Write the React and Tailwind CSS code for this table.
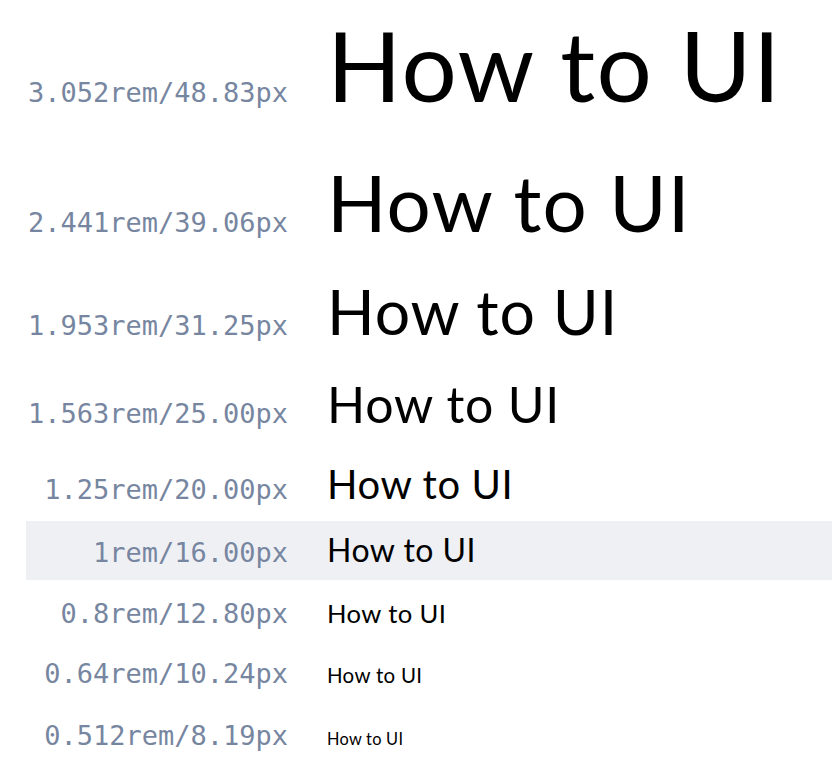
import React from 'react';

const rows = [
  { label: '3.052rem/48.83px', size: 'text-[97.66px]', row: 'h-[148px] pt-[16px]' },
  { label: '2.441rem/39.06px', size: 'text-[78.12px]', row: 'h-[120px] pt-[15px]' },
  { label: '1.953rem/31.25px', size: 'text-[62.5px]', row: 'h-[100px] pt-[12px]' },
  { label: '1.563rem/25.00px', size: 'text-[50px]', row: 'h-[82px] pt-[11px]' },
  { label: '1.25rem/20.00px', size: 'text-[40px]', row: 'h-[71px] pt-[14px]' },
  { label: '1rem/16.00px', size: 'text-[32px]', row: 'h-[59px] pt-[13px] bg-[#eff0f4]' },
  { label: '0.8rem/12.80px', size: 'text-[25.6px]', row: 'h-[62px] pt-[20px]' },
  { label: '0.64rem/10.24px', size: 'text-[20.48px]', row: 'h-[62px] pt-[18px]' },
  { label: '0.512rem/8.19px', size: 'text-[16.38px]', row: 'h-[62px] pt-[18px]' },
];

export default function App() {
  return (
    <div className="w-[832px] h-[772px] bg-white overflow-hidden">
      <div className="ml-[26px] flex flex-col">
        {rows.map((r) => (
          <div key={r.label} className={`flex items-baseline gap-[39px] ${r.row}`}>
            <span className="w-[262px] shrink-0 text-right leading-none text-[27px] text-[#7786a0] font-['DejaVu_Sans_Mono',monospace]">
              {r.label}
            </span>
            <span className={`leading-none text-black whitespace-nowrap tracking-[0.015em] font-['Lato',sans-serif] ${r.size}`}>
              How to UI
            </span>
          </div>
        ))}
      </div>
    </div>
  );
}
